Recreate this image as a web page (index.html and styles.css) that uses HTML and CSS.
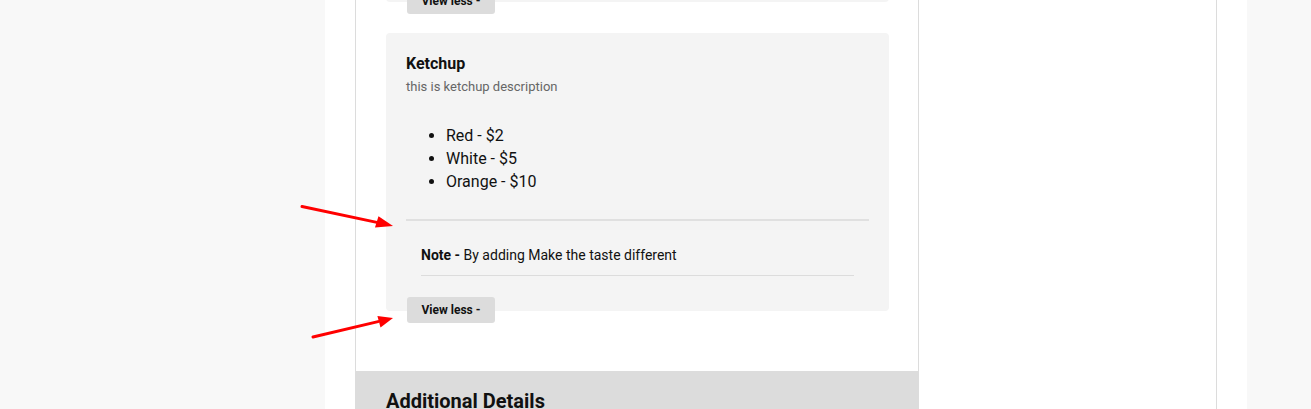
FILE: index.html
```html
<!DOCTYPE html>
<html>
<head>
<meta charset="utf-8">
<link rel="stylesheet" href="styles.css">
</head>
<body>
<div class="page">
  <div class="wrapper">
    <div class="main-col">
      <div class="card card-prev"></div>
      <button class="toggle">View less -</button>

      <div class="card card-ketchup">
        <h3 class="item-title">Ketchup</h3>
        <p class="item-desc">this is ketchup description</p>
        <ul class="options">
          <li>Red - $2</li>
          <li>White - $5</li>
          <li>Orange - $10</li>
        </ul>
        <hr class="divider">
        <div class="note"><strong>Note -</strong> By adding Make the taste different</div>
      </div>
      <button class="toggle">View less -</button>

      <div class="additional">
        <h2>Additional Details</h2>
      </div>
    </div>
    <div class="side-col"></div>
  </div>
</div>
<svg class="arrows" width="1311" height="409" viewBox="0 0 1311 409">
  <line x1="302" y1="206.5" x2="378" y2="222.6" stroke="#ff0000" stroke-width="3" stroke-linecap="round"/>
  <polygon points="393,226 375,227.5 378.5,216.2" fill="#ff0000"/>
  <line x1="313" y1="337" x2="378" y2="321.6" stroke="#ff0000" stroke-width="3" stroke-linecap="round"/>
  <polygon points="393,318 380.5,327.6 377.4,316" fill="#ff0000"/>
</svg>
</body>
</html>
```

FILE: styles.css
```css
html, body {
  margin: 0;
  padding: 0;
  height: 100%;
  overflow: hidden;
}
body {
  background: #f8f8f8;
  font-family: Roboto, "Liberation Sans", Arial, sans-serif;
  color: #111;
  position: relative;
}
.page {
  display: flex;
  height: 409px;
}
.wrapper {
  margin-left: 325px;
  width: 922px;
  background: #fff;
  display: flex;
  padding-left: 30px;
  box-sizing: border-box;
}
.main-col {
  width: 564px;
  box-sizing: border-box;
  border-left: 1px solid #dcdcdc;
  border-right: 1px solid #dcdcdc;
  padding: 0 29px 0 30px;
  display: flex;
  flex-direction: column;
  align-items: flex-start;
}
.main-col > * {
  flex-shrink: 0;
}
.side-col {
  width: 298px;
  box-sizing: border-box;
  border-right: 1px solid #dcdcdc;
}
.card {
  width: 503px;
  box-sizing: border-box;
  background: #f4f4f4;
  border-radius: 4px;
}
.card-prev {
  height: 40px;
  margin-top: -38px;
}
.toggle {
  display: block;
  margin: -14px 0 0 21px;
  width: 88px;
  height: 26px;
  border: none;
  border-radius: 3px;
  background: #dcdcdc;
  font-family: Roboto, "Liberation Sans", Arial, sans-serif;
  font-weight: 700;
  font-size: 12px;
  color: #111;
  padding: 0;
  position: relative;
}
.card-ketchup {
  margin-top: 19px;
  padding: 21px 20px 35px 20px;
}
.item-title {
  margin: 0;
  font-size: 16px;
  line-height: 20px;
  font-weight: 700;
}
.item-desc {
  margin: 4px 0 0;
  font-size: 13px;
  line-height: 18px;
  color: #666;
}
.options {
  margin: 28px 0 0;
  padding-left: 40px;
  font-size: 16px;
  line-height: 23px;
}
.divider {
  margin: 26px 0 0;
  border: none;
  border-top: 2px solid #e0e0e0;
  height: 0;
}
.note {
  margin: 0 15px;
  padding: 24px 0 10px;
  font-size: 14px;
  line-height: 20px;
  border-bottom: 1px solid #dcdcdc;
}
.note strong {
  font-weight: 700;
}
.additional {
  margin: 48px -30px 0 -31px;
  width: 564px;
  background: #dcdcdc;
  padding: 17px 0 0 31px;
  box-sizing: border-box;
  height: 60px;
}
.additional h2 {
  margin: 0;
  font-size: 20px;
  line-height: 26px;
  font-weight: 700;
}
.arrows {
  position: absolute;
  left: 0;
  top: 0;
  pointer-events: none;
}
```
